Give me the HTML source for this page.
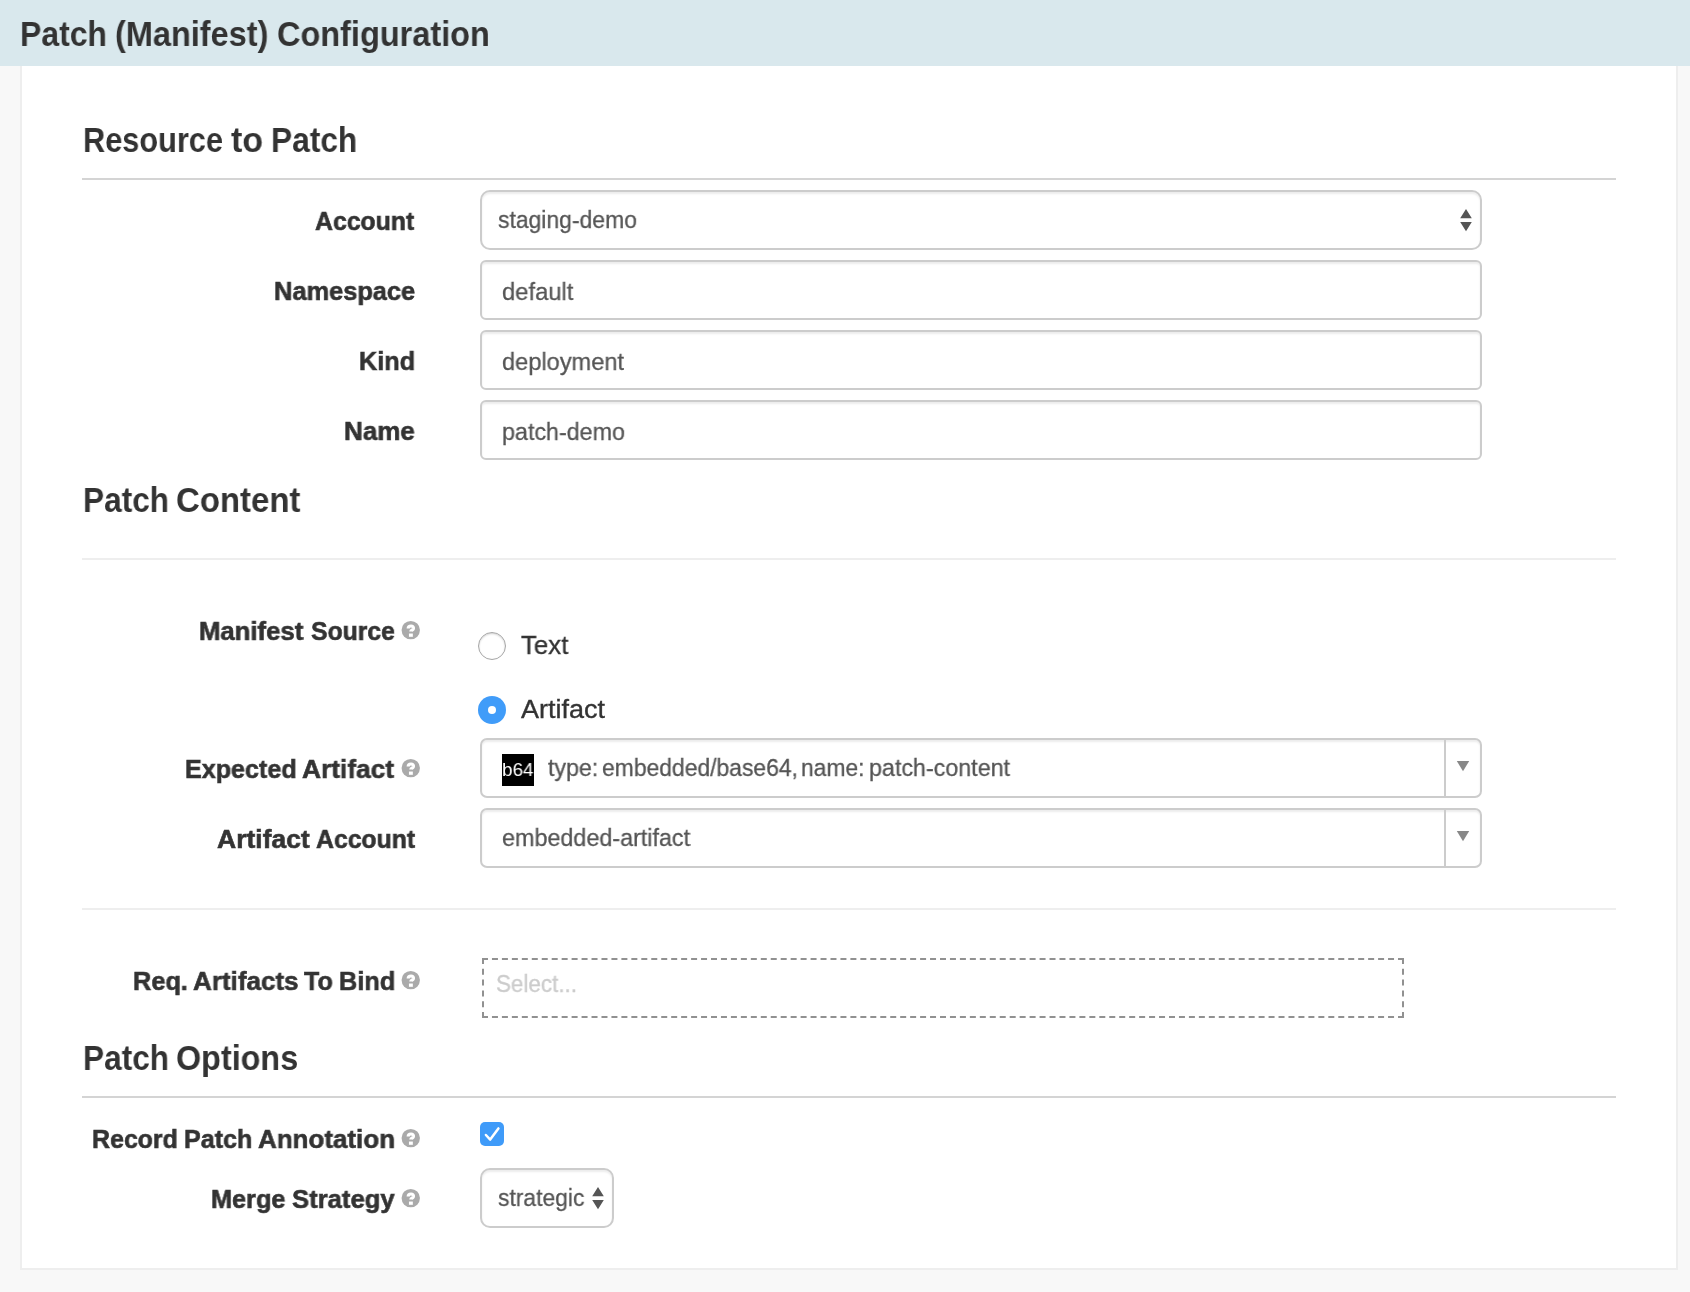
<!DOCTYPE html>
<html lang="en"><head><meta charset="utf-8"><title>Patch (Manifest) Configuration</title>
<style>
html,body{margin:0;padding:0}
body{width:1690px;height:1292px;background:#f8f8f8;position:relative;overflow:hidden;font-family:"Liberation Sans",sans-serif}
header,main,section,h2,h3,label,.fg,.ctl,.opt{display:block;margin:0;padding:0;font:inherit}
.a{position:absolute;display:block}
.t{position:absolute;white-space:nowrap;display:block;will-change:transform;transform-origin:0 50%}
.th{font:700 34.5px/41.4px "Liberation Sans",sans-serif;color:#333}
.tl{font:700 26.5px/31.8px "Liberation Sans",sans-serif;color:#333;-webkit-text-stroke:.6px #333}
.tv{font:400 24.4px/29.28px "Liberation Sans",sans-serif;color:#555;-webkit-text-stroke:.3px #555}
.tr{font:400 26.6px/31.92px "Liberation Sans",sans-serif;color:#333;-webkit-text-stroke:.35px #333}
.ts{font-family:"Liberation Sans",sans-serif;color:#ccc;-webkit-text-stroke:.35px #ccc}
.tm{font-family:"Liberation Sans","Liberation Mono",sans-serif;color:#fff}
.hdr{left:0;top:0;width:1690px;height:66px;background:#d9e8ed}
.card{left:20px;top:66px;width:1654px;height:1202px;background:#fff;border:2px solid #eee;border-top:0}
.hr{left:82px;width:1534px;height:2px;background:#eee}
.hr.dk{background:#d4d4d4}
.inp{left:480px;width:998px;height:56px;border:2px solid #ccc;border-radius:6px;background:#fff;box-shadow:inset 0 2px 2px rgba(0,0,0,.075)}
.sel{border-radius:10px}
.rs{border-radius:7px}
.div{width:2px;height:56px;background:#ccc;left:1444px}
.b64{left:502px;top:754px;width:32px;height:32px;background:#000}
.radio{left:478px;width:26px;height:26px;border-radius:50%;border:1px solid #a6a6a6;background:#fff;box-shadow:inset 0 1px 2px rgba(0,0,0,.18)}
.radio.on{width:28px;height:28px;border:0;background:#409cf9;box-shadow:none}
.radio.on::after{content:"";position:absolute;left:9.7px;top:9.7px;width:8.6px;height:8.6px;border-radius:50%;background:#fff}
</style></head>
<body>
<header><div class="a hdr"></div><h2><span id="h0a" class="t th" style="left:19.83px;top:14px;transform:scaleX(0.9266)">Patch</span> <span id="h0b" class="t th" style="left:114.54px;top:14px;transform:scaleX(0.9411)">(Manifest)</span> <span id="h0c" class="t th" style="left:276.88px;top:14px;transform:scaleX(0.9413)">Configuration</span></h2></header>
<main><div class="a card"></div>
<section>
<h3><span id="h1a" class="t th" style="left:82.78px;top:120px;transform:scaleX(0.8907)">Resource</span> <span id="h1b" class="t th" style="left:230.81px;top:120px;transform:scaleX(0.9839)">to</span> <span id="h1c" class="t th" style="left:271.11px;top:120px;transform:scaleX(0.9188)">Patch</span></h3><div class="a hr dk" style="top:178px"></div>
<div class="fg"><label><span id="l1a" class="t tl" style="left:315.41px;top:206px;transform:scaleX(0.9357)">Account</span></label><div class="ctl"><div class="a inp sel" style="top:190px"></div><span id="v1a" class="t tv" style="left:497.84px;top:205px;transform:scaleX(0.9400)">staging-demo</span><svg class="a" style="left:1459.2px;top:207.9px" width="14" height="26" viewBox="0 0 14 26"><path d="M7 1 L12.8 10.2 L1.2 10.2 Z M1.2 14 L12.8 14 L7 23.2 Z" fill="#555"/></svg></div></div>
<div class="fg"><label><span id="l2a" class="t tl" style="left:273.76px;top:276px;transform:scaleX(0.9586)">Namespace</span></label><div class="ctl"><div class="a inp" style="top:260px"></div><span id="v2a" class="t tv" style="left:502.01px;top:277px;transform:scaleX(0.9745)">default</span></div></div>
<div class="fg"><label><span id="l3a" class="t tl" style="left:358.75px;top:346px;transform:scaleX(0.9524)">Kind</span></label><div class="ctl"><div class="a inp" style="top:330px"></div><span id="v3a" class="t tv" style="left:501.85px;top:347px;transform:scaleX(0.9679)">deployment</span></div></div>
<div class="fg"><label><span id="l4a" class="t tl" style="left:343.50px;top:416px;transform:scaleX(0.9797)">Name</span></label><div class="ctl"><div class="a inp" style="top:400px"></div><span id="v4a" class="t tv" style="left:502.33px;top:417px;transform:scaleX(0.9545)">patch-demo</span></div></div>
</section>
<section>
<h3><span id="h2a" class="t th" style="left:82.80px;top:480px;transform:scaleX(0.9163)">Patch</span> <span id="h2b" class="t th" style="left:175.90px;top:480px;transform:scaleX(0.9551)">Content</span></h3><div class="a hr" style="top:558px"></div>
<div class="fg"><label><span id="l5a" class="t tl" style="left:199.30px;top:616px;transform:scaleX(0.9695)">Manifest</span> <span id="l5b" class="t tl" style="left:310.58px;top:616px;transform:scaleX(0.9348)">Source</span></label><svg class="a help" style="left:390.00px;top:610.00px" width="40" height="40" viewBox="0 0 1292 1292"><circle cx="670" cy="650" r="297" fill="#aaa"/><path d="M588 598 C 590 490, 775 488, 756 600 C 744 660, 672 648, 672 694" fill="none" stroke="#fff" stroke-width="104"/><rect x="612" y="760" width="126" height="106" fill="#fff"/></svg><div class="ctl"><div class="opt"><span class="a radio" style="top:632px"></span><span id="r1a" class="t tr" style="left:520.63px;top:630px;transform:scaleX(0.9704)">Text</span></div><div class="opt"><span class="a radio on" style="top:696px"></span><span id="r2a" class="t tr" style="left:520.88px;top:694px;transform:scaleX(1.0157)">Artifact</span></div></div></div>
<div class="fg"><label><span id="l6a" class="t tl" style="left:185.00px;top:754px;transform:scaleX(0.9469)">Expected</span> <span id="l6b" class="t tl" style="left:302.49px;top:754px;transform:scaleX(0.9913)">Artifact</span></label><svg class="a help" style="left:390.00px;top:748.40px" width="40" height="40" viewBox="0 0 1292 1292"><circle cx="670" cy="650" r="297" fill="#aaa"/><path d="M588 598 C 590 490, 775 488, 756 600 C 744 660, 672 648, 672 694" fill="none" stroke="#fff" stroke-width="104"/><rect x="612" y="760" width="126" height="106" fill="#fff"/></svg><div class="ctl"><div class="a inp rs" style="top:738px"></div><span class="a b64"></span><span id="m1a" class="t tm" style="left:501.84px;top:758px;transform:scaleX(0.9830);font-size:19.2px;line-height:23.04px">b64</span> <span id="v5a" class="t tv" style="left:548.04px;top:753px;transform:scaleX(0.9509)">type:</span> <span id="v5b" class="t tv" style="left:602.14px;top:753px;transform:scaleX(0.9382)">embedded/base64,</span> <span id="v5c" class="t tv" style="left:801.16px;top:753px;transform:scaleX(0.9358)">name:</span> <span id="v5d" class="t tv" style="left:869.33px;top:753px;transform:scaleX(0.9541)">patch-content</span><span class="a div" style="top:740px"></span><svg class="a" style="left:1455px;top:760px" width="16" height="12" viewBox="0 0 16 12"><path d="M1.8 0.9 L14.2 0.9 L8 11.2 Z" fill="#888"/></svg></div></div>
<div class="fg"><label><span id="l7a" class="t tl" style="left:216.61px;top:824px;transform:scaleX(0.9983)">Artifact</span> <span id="l7b" class="t tl" style="left:315.80px;top:824px;transform:scaleX(0.9348)">Account</span></label><div class="ctl"><div class="a inp rs" style="top:808px"></div><span id="v6a" class="t tv" style="left:501.84px;top:823px;transform:scaleX(0.9569)">embedded-artifact</span><span class="a div" style="top:810px"></span><svg class="a" style="left:1455px;top:830px" width="16" height="12" viewBox="0 0 16 12"><path d="M1.8 0.9 L14.2 0.9 L8 11.2 Z" fill="#888"/></svg></div></div>
<div class="a hr" style="top:908px"></div>
<div class="fg"><label><span id="l8a" class="t tl" style="left:132.72px;top:966px;transform:scaleX(0.9552)">Req.</span> <span id="l8b" class="t tl" style="left:192.53px;top:966px;transform:scaleX(0.9813)">Artifacts</span> <span id="l8c" class="t tl" style="left:304.34px;top:966px;transform:scaleX(0.9463)">To</span> <span id="l8d" class="t tl" style="left:338.72px;top:966px;transform:scaleX(0.9555)">Bind</span></label><svg class="a help" style="left:390.00px;top:960.20px" width="40" height="40" viewBox="0 0 1292 1292"><circle cx="670" cy="650" r="297" fill="#aaa"/><path d="M588 598 C 590 490, 775 488, 756 600 C 744 660, 672 648, 672 694" fill="none" stroke="#fff" stroke-width="104"/><rect x="612" y="760" width="126" height="106" fill="#fff"/></svg><div class="ctl"><svg class="a" style="left:482px;top:958px" width="922" height="60" viewBox="0 0 922 60"><g stroke="#919191" stroke-width="2" fill="none"><line x1="0" y1="1" x2="922" y2="1" stroke-dasharray="6 3.9565"/><line x1="0" y1="59" x2="922" y2="59" stroke-dasharray="6 3.9565"/><line x1="1" y1="0" x2="1" y2="60" stroke-dasharray="6 4.8"/><line x1="921" y1="0" x2="921" y2="60" stroke-dasharray="6 4.8"/></g></svg><span id="s1a" class="t ts" style="left:496.44px;top:971px;transform:scaleX(0.9745);font-size:23.0px;line-height:27.6px">Select...</span></div></div>
</section>
<section>
<h3><span id="h3a" class="t th" style="left:82.73px;top:1038px;transform:scaleX(0.9165)">Patch</span> <span id="h3b" class="t th" style="left:176.25px;top:1038px;transform:scaleX(0.9370)">Options</span></h3><div class="a hr dk" style="top:1096px"></div>
<div class="fg"><label><span id="l9a" class="t tl" style="left:91.86px;top:1124px;transform:scaleX(0.9407)">Record</span> <span id="l9b" class="t tl" style="left:183.63px;top:1124px;transform:scaleX(0.9461)">Patch</span> <span id="l9c" class="t tl" style="left:258.05px;top:1124px;transform:scaleX(0.9797)">Annotation</span></label><svg class="a help" style="left:389.95px;top:1118.10px" width="40" height="40" viewBox="0 0 1292 1292"><circle cx="670" cy="650" r="297" fill="#aaa"/><path d="M588 598 C 590 490, 775 488, 756 600 C 744 660, 672 648, 672 694" fill="none" stroke="#fff" stroke-width="104"/><rect x="612" y="760" width="126" height="106" fill="#fff"/></svg><div class="ctl"><svg class="a" style="left:480px;top:1122px" width="24" height="24" viewBox="0 0 24 24"><rect width="24" height="24" rx="5" fill="#3f9bf9"/><path d="M5.9 13.0 L10.2 17.6 L18.4 6.4" fill="none" stroke="#fff" stroke-width="2.5" stroke-linecap="round" stroke-linejoin="round"/></svg></div></div>
<div class="fg"><label><span id="l10a" class="t tl" style="left:210.75px;top:1184px;transform:scaleX(0.9540)">Merge</span> <span id="l10b" class="t tl" style="left:292.06px;top:1184px;transform:scaleX(0.9684)">Strategy</span></label><svg class="a help" style="left:389.95px;top:1178.00px" width="40" height="40" viewBox="0 0 1292 1292"><circle cx="670" cy="650" r="297" fill="#aaa"/><path d="M588 598 C 590 490, 775 488, 756 600 C 744 660, 672 648, 672 694" fill="none" stroke="#fff" stroke-width="104"/><rect x="612" y="760" width="126" height="106" fill="#fff"/></svg><div class="ctl"><div class="a inp sel" style="top:1168px;width:130px"></div><span id="v8a" class="t tv" style="left:498.38px;top:1183px;transform:scaleX(0.9370)">strategic</span><svg class="a" style="left:591.2px;top:1186.0px" width="14" height="26" viewBox="0 0 14 26"><path d="M7 1 L12.8 10.2 L1.2 10.2 Z M1.2 14 L12.8 14 L7 23.2 Z" fill="#555"/></svg></div></div>
</section>
</main>
</body></html>
